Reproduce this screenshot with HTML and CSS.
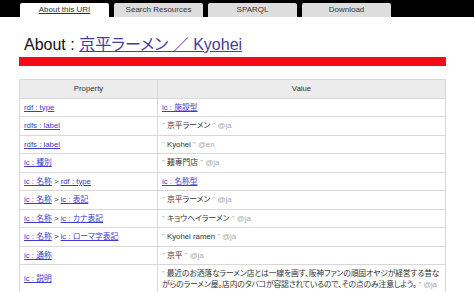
FILE: index.html
```html
<!DOCTYPE html>
<html lang="ja">
<head>
    <meta charset="UTF-8">
    <meta name="viewport" content="width=device-width, initial-scale=1.0">
    <title>About : 京平ラーメン ／ Kyohei</title>
    <link rel="stylesheet" href="styles.css">
</head>

<body>
    <div class="tabs">
        <a class="tab active" href="#">About this URI</a>
        <a class="tab" href="#">Search Resources</a>
        <a class="tab" href="#">SPARQL</a>
        <a class="tab" href="#">Download</a>
    </div>

    <div class="main">
        <h1 class="title">About : <a href="#">京平ラーメン ／ Kyohei</a></h1>
        <div class="redbar"></div>

        <table class="props">
            <tr>
                <th class="col-prop">Property</th>
                <th>Value</th>
            </tr>
            <tr>
                <td><a href="#">rdf : type</a></td>
                <td><a href="#">ic : 施設型</a></td>
            </tr>
            <tr>
                <td><a href="#">rdfs : label</a></td>
                <td><span class="q">"</span> 京平ラーメン <span class="q">" @ja</span></td>
            </tr>
            <tr>
                <td><a href="#">rdfs : label</a></td>
                <td><span class="q">"</span> Kyohei <span class="q">" @en</span></td>
            </tr>
            <tr>
                <td><a href="#">ic : 種別</a></td>
                <td><span class="q">"</span> 麺専門店 <span class="q">" @ja</span></td>
            </tr>
            <tr>
                <td><a href="#">ic : 名称</a> &gt; <a href="#">rdf : type</a></td>
                <td><a href="#">ic : 名称型</a></td>
            </tr>
            <tr>
                <td><a href="#">ic : 名称</a> &gt; <a href="#">ic : 表記</a></td>
                <td><span class="q">"</span> 京平ラーメン <span class="q">" @ja</span></td>
            </tr>
            <tr>
                <td><a href="#">ic : 名称</a> &gt; <a href="#">ic : カナ表記</a></td>
                <td><span class="q">"</span> キョウヘイラーメン <span class="q">" @ja</span></td>
            </tr>
            <tr>
                <td><a href="#">ic : 名称</a> &gt; <a href="#">ic : ローマ字表記</a></td>
                <td><span class="q">"</span> Kyohei ramen <span class="q">" @ja</span></td>
            </tr>
            <tr>
                <td><a href="#">ic : 通称</a></td>
                <td><span class="q">"</span> 京平 <span class="q">" @ja</span></td>
            </tr>
            <tr>
                <td><a href="#">ic : 説明</a></td>
                <td class="long"><span class="q">"</span> 最近のお洒落なラーメン店とは一線を画す、阪神ファンの頑固オヤジが経営する昔ながらのラーメン屋。店内のタバコが容認されているので、その点のみ注意しよう。 <span class="q">" @ja</span></td>
            </tr>
            <tr>
                <td>&nbsp;</td>
                <td>&nbsp;</td>
            </tr>
        </table>
    </div>
</body>
</html>
```

FILE: styles.css
```css
body {
    font-family: "Liberation Sans", "Noto Sans CJK JP", sans-serif;
    margin: 0;
    padding: 0;
    background-color: #fff;
    color: #333;
}

.tabs {
    display: flex;
    gap: 5px;
    height: 17px;
    padding: 3px 0 0 20px;
    box-sizing: border-box;
    background-color: #000;
}

.tab {
    width: 89px;
    height: 14px;
    line-height: 14px;
    text-align: center;
    font-size: 8px;
    color: #333;
    text-decoration: none;
    background-color: #ddd;
    border-radius: 2px 2px 0 0;
}

.tab.active {
    background-color: #fff;
    text-decoration: underline;
}

.main {
    padding: 0 28px 0 19px;
}

.title {
    margin: 18px 0 2px 5px;
    font-size: 16px;
    font-weight: normal;
    line-height: 20px;
    color: #111;
    font-feature-settings: "palt";
}

.title a {
    color: #4b3a9a;
}

.redbar {
    height: 9px;
    background-color: #f50a17;
}

.props {
    width: 100%;
    margin-top: 13px;
    border-collapse: collapse;
    font-size: 7.8px;
    font-feature-settings: "palt";
}

.props th,
.props td {
    border: 1px solid #d8d8d8;
    padding: 4px 4px 3px;
    line-height: 10.5px;
    text-align: left;
}

.props th {
    background-color: #ececec;
    font-weight: normal;
    text-align: center;
}

.props td.long {
    padding: 3px 4px 2px;
    line-height: 11px;
    letter-spacing: -0.15px;
}

.col-prop {
    width: 129px;
}

.props a {
    color: #3b3bcc;
}

.q {
    color: #aaa;
}
```
